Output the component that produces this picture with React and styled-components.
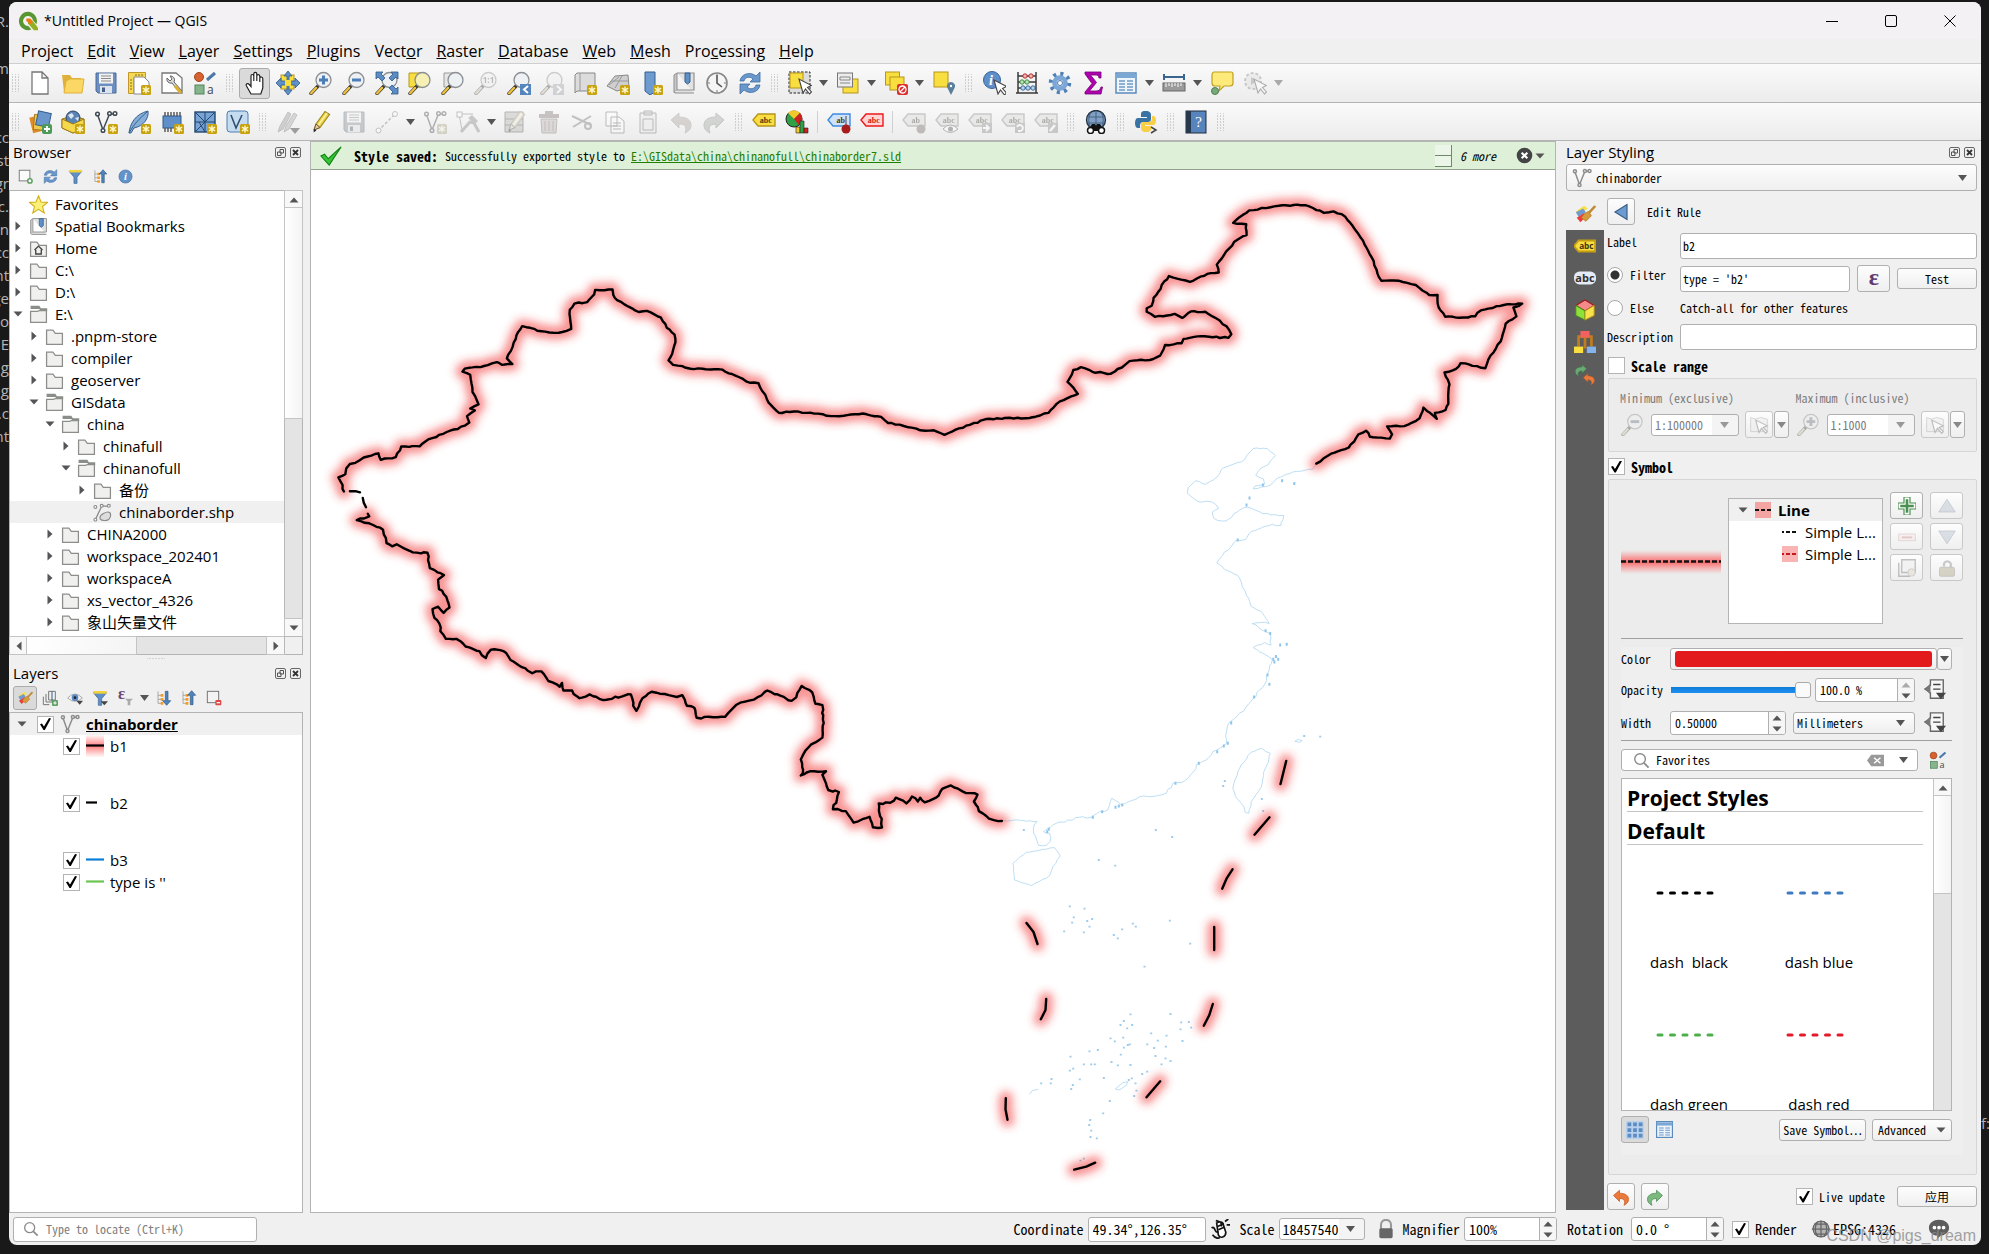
import React from "react";
import styled, { createGlobalStyle, css } from "styled-components";

const arrow = (fill) =>
  `url("data:image/svg+xml,%3Csvg xmlns='http://www.w3.org/2000/svg' width='11' height='6'%3E%3Cpath d='M0 0h11L5.5 6z' fill='%23${fill}'/%3E%3C/svg%3E")`;

const GlobalStyle = createGlobalStyle`
  *, *::before, *::after { box-sizing: border-box; }
  body {
    margin: 0;
    background: #191919;
    color: #000;
    font-family: "Open Sans", "Noto Sans CJK SC", sans-serif;
    font-size: 15px;
    line-height: 22px;
    overflow: hidden;
  }
  button, input, select { font: inherit; color: inherit; margin: 0; }
  button { padding: 0; }
  svg { display: block; flex: none; }
`;

const smallFont = css`
  font-family: "Noto Sans CJK SC", "Liberation Mono", monospace;
  font-feature-settings: "hwid";
  font-size: 12px;
  line-height: 16px;
`;

const raised = css`
  background: linear-gradient(#fdfdfd, #efefef);
  border: 1px solid #b0b0b0;
  border-radius: 3px;
`;

/* ---------- window ---------- */

const Desktop = styled.div`
  display: grid;
  grid-template-columns: 9px minmax(0, 1fr) 8px;
  height: 100vh;
  padding: 2px 0 9px;
`;

const Gutter = styled.div`
  overflow: hidden;
  color: #b4b4b4;
  font-size: 15px;
  line-height: 23px;
  white-space: nowrap;
  display: flex;
  flex-direction: column;
  align-items: ${(p) => (p.$right ? "flex-start" : "flex-end")};
  padding-top: ${(p) => (p.$right ? 1110 : 8)}px;
`;

const GutterGap = styled.span`
  flex: 0 0 ${(p) => p.$size}px;
`;

const Window = styled.div`
  display: flex;
  flex-direction: column;
  min-width: 0;
  min-height: 0;
  background: #f0f0f0;
  border-radius: 8px;
  overflow: hidden;
`;

const TitleBar = styled.header`
  display: flex;
  align-items: center;
  height: 37px;
  flex: none;
  padding: 0 2px 0 9px;
  background: #f3f1f3;
`;

const TitleText = styled.h1`
  flex: 1;
  margin: 0 0 0 6px;
  font-size: 14px;
  font-weight: 400;
`;

const CaptionButton = styled.button`
  display: flex;
  align-items: center;
  justify-content: center;
  width: 59px;
  height: 37px;
  border: 0;
  background: none;
`;

const MenuBar = styled.nav`
  display: flex;
  gap: 14px;
  flex: none;
  height: 25px;
  padding-left: 12px;
  border-bottom: 1px solid #cfcfcf;
  font-size: 16px;
`;

const MenuItem = styled.a`
  color: inherit;
  text-decoration: none;
  line-height: 25px;
`;

const Toolbar = styled.div`
  display: flex;
  align-items: center;
  gap: 2px;
  flex: none;
  height: ${(p) => p.$height}px;
  background: linear-gradient(#fafafa, #ececec);
  border-bottom: 1px solid #b4b4b4;
`;

const Handle = styled.span`
  width: 15px;
  height: 18px;
  flex: none;
  background: radial-gradient(circle, #a8a8a8 1px, transparent 1px) center / 3px 3px content-box;
  padding: 0 4px;
  &:first-child {
    width: 13px;
    padding: 0 3px;
  }
`;

const Divider = styled.span`
  width: 1px;
  height: 22px;
  margin: 0 3px;
  background: #d0d0d0;
`;

const ToolButton = styled.button`
  display: flex;
  align-items: center;
  justify-content: center;
  width: ${(p) => p.$size || 31}px;
  height: ${(p) => p.$size || 31}px;
  flex: none;
  border: 1px solid ${(p) => (p.$on ? "#ababab" : "transparent")};
  border-radius: 3px;
  background: ${(p) => (p.$on ? "#dadada" : "none")};
  opacity: ${(p) => (p.$dim ? 0.4 : 1)};
  filter: ${(p) => (p.$dim ? "grayscale(0.8)" : "none")};
`;

const MenuArrow = styled.button`
  width: 13px;
  height: 20px;
  flex: none;
  border: 0;
  background: ${(p) => arrow(p.$dim ? "aaaaaa" : "555555")} center / 9px 6px no-repeat;
`;

/* ---------- docks ---------- */

const Workspace = styled.div`
  display: flex;
  flex: 1;
  min-height: 0;
  padding-right: 4px;
`;

const LeftDock = styled.aside`
  display: flex;
  flex-direction: column;
  width: 294px;
  flex: none;
`;

const DockHeader = styled.div`
  display: flex;
  align-items: center;
  gap: 4px;
  height: 22px;
  flex: none;
  padding: 0 2px 0 ${(p) => (p.$flush ? 0 : 4)}px;
`;

const DockTitle = styled.h2`
  flex: 1;
  margin: 0;
  font-family: "Open Sans", sans-serif;
  font-feature-settings: normal;
  font-size: 15px;
  font-weight: 400;
`;

const DockButton = styled.button`
  display: flex;
  align-items: center;
  justify-content: center;
  width: 11px;
  height: 11px;
  border: 1px solid #666;
  border-radius: 2px;
  background: none;
`;

const DockTools = styled.div`
  display: flex;
  align-items: center;
  gap: 1px;
  flex: none;
  height: ${(p) => p.$height}px;
  padding-left: 4px;
`;

const TreeFrame = styled.div`
  display: grid;
  grid-template-columns: minmax(0, 1fr) 18px;
  grid-template-rows: minmax(0, 1fr) 18px;
  height: 465px;
  flex: none;
  border: 1px solid #b4b4b4;
  background: #fff;
`;

const TreeList = styled.ul`
  list-style: none;
  margin: 0;
  padding: 2px 0 0;
  overflow: hidden;
`;

const TreeRow = styled.li`
  display: flex;
  align-items: center;
  height: 22px;
  padding-left: ${(p) => 2 + p.$depth * 16}px;
  background: ${(p) => (p.$selected ? "#f0f0f0" : "none")};
  white-space: pre;
`;

const Expander = styled.span`
  display: flex;
  justify-content: center;
  width: 11px;
  margin-right: 6px;
`;

const TreeLabel = styled.span`
  margin-left: 7px;
`;

const ScrollBar = styled.div`
  display: flex;
  flex-direction: ${(p) => (p.$horizontal ? "row" : "column")};
  background: #e4e4e4;
  border: 0 solid #b8b8b8;
  border-width: ${(p) => (p.$horizontal ? "1px 0 0" : "0 0 0 1px")};
`;

const ScrollButton = styled.button`
  display: flex;
  align-items: center;
  justify-content: center;
  flex: 0 0 17px;
  border: 0;
  background: #f8f8f8;
  box-shadow: 0 0 0 1px #c4c4c4;
`;

const ScrollThumb = styled.div`
  flex: ${(p) => p.$grow} 1 0;
  background: linear-gradient(90deg, #fff, #f4f4f4);
  box-shadow: 0 0 0 1px #c4c4c4;
`;

const ScrollSpace = styled.div`
  flex: ${(p) => p.$grow} 1 0;
`;

const Corner = styled.div`
  background: #f0f0f0;
  border: 1px solid #b8b8b8;
  border-width: 1px 0 0 1px;
`;

const Grip = styled.div`
  height: 7px;
  flex: none;
  background: radial-gradient(circle, #b5b5b5 1px, transparent 1px) center / 3px 3px;
  width: 18px;
  align-self: center;
  clip-path: inset(2px 0 3px);
`;

const LayerList = styled.ul`
  flex: 1;
  list-style: none;
  margin: 0;
  padding: 0;
  border: 1px solid #b4b4b4;
  background: #fff;
  min-height: 0;
`;

const LayerRow = styled.li`
  display: flex;
  align-items: flex-start;
  height: ${(p) => (p.$tall ? 57 : 22)}px;
  padding-left: ${(p) => (p.$group ? 7 : 53)}px;
  background: ${(p) => (p.$group ? "#f0f0f0" : "none")};
  label {
    display: flex;
    align-items: center;
    height: 22px;
    gap: 6px;
  }
  input {
    margin-left: ${(p) => (p.$group ? 4 : 0)}px;
  }
  b {
    text-decoration: underline;
  }
`;

const CheckBox = styled.input.attrs({ type: "checkbox" })`
  appearance: none;
  width: 17px;
  height: 17px;
  flex: none;
  border: 1px solid #b4b4b4;
  background: #fff;
  display: grid;
  place-items: center;
  &:checked::after {
    content: "";
    width: 11px;
    height: 12px;
    background: #000;
    clip-path: polygon(0 52%, 18% 45%, 36% 70%, 82% 0, 100% 4%, 44% 100%, 32% 100%);
  }
`;

const Radio = styled.input.attrs({ type: "radio" })`
  appearance: none;
  width: 16px;
  height: 16px;
  flex: none;
  border: 1px solid #a8a8a8;
  border-radius: 50%;
  background: #fff;
  &:checked {
    background: radial-gradient(circle, #333 4px, #fff 5px);
  }
`;

/* ---------- map ---------- */

const Canvas = styled.main`
  display: flex;
  flex-direction: column;
  flex: 1;
  min-width: 0;
  margin: 0 10px 0 7px;
  border: 1px solid #b4b4b4;
  background: #fff;
`;

const Message = styled.div`
  ${smallFont}
  display: flex;
  align-items: center;
  height: 28px;
  flex: none;
  padding: 0 10px 0 9px;
  background: #dff0d8;
  border-bottom: 1px solid #93a08e;
  white-space: pre;
  b {
    font-size: 14px;
    margin: 0 7px 0 12px;
  }
  a {
    color: #1f7f00;
  }
`;

const MessageMore = styled.em`
  margin: 0 20px 0 8px;
`;

const MessageSteps = styled.div`
  display: flex;
  flex-direction: column;
  margin-left: auto;
`;

const StepButton = styled.button`
  width: 17px;
  height: 11px;
  border: 0 solid #6f8a6a;
  border-width: 0 1px 1px 0;
  background: #ecf6e8;
`;

const MapArea = styled.div`
  flex: 1;
  min-height: 0;
  svg {
    width: 100%;
    height: 100%;
  }
`;

/* ---------- layer styling ---------- */

const RightDock = styled.aside`
  ${smallFont}
  display: flex;
  flex-direction: column;
  width: 411px;
  flex: none;
`;

const LayerPicker = styled.div`
  ${raised}
  display: flex;
  align-items: center;
  height: 27px;
  flex: none;
  margin-top: 1px;
  padding-left: 5px;
`;

const PlainSelect = styled.select`
  appearance: none;
  flex: 1;
  height: 100%;
  border: 0;
  padding: 0 4px;
  background: ${arrow("555555")} right 9px center / 9px 6px no-repeat;
`;

const StylingBody = styled.div`
  display: flex;
  flex: 1;
  min-height: 0;
  padding-top: 7px;
`;

const SideTabs = styled.div`
  display: flex;
  flex-direction: column;
  width: 38px;
  flex: none;
  margin-bottom: 3px;
  background: #5c5c5c;
`;

const SideTab = styled.button`
  display: flex;
  align-items: center;
  justify-content: center;
  height: 32px;
  border: 0;
  background: ${(p) => (p.$on ? "#f0f0f0" : "none")};
`;

const StylePage = styled.div`
  display: flex;
  flex-direction: column;
  flex: 1;
  min-width: 0;
  padding: 0 0 3px 3px;
`;

const Row = styled.div`
  display: flex;
  align-items: center;
  flex: none;
  gap: ${(p) => p.$gap || 0}px;
  height: ${(p) => p.$height || 27}px;
  margin-top: ${(p) => p.$top || 0}px;
`;

const FieldLabel = styled.label`
  display: flex;
  align-items: center;
  gap: 7px;
  width: ${(p) => p.$width || 73}px;
  height: ${(p) => (p.$raised ? 20 : 24)}px;
  flex: none;
  align-self: ${(p) => (p.$raised ? "flex-start" : "center")};
  white-space: nowrap;
`;

const CheckLabel = styled.label`
  display: flex;
  align-items: center;
  gap: 6px;
  margin-left: 1px;
  ${(p) => p.$bold && "font-weight: 700; font-size: 14px;"}
`;

const TextInput = styled.input`
  flex: 1;
  min-width: 0;
  height: 26px;
  border: 1px solid #b0b0b0;
  border-radius: 3px;
  background: #fff;
  padding: 0 2px;
`;

const Button = styled.button`
  ${raised}
  display: flex;
  align-items: center;
  justify-content: center;
  gap: 10px;
  width: ${(p) => p.$width || 28}px;
  height: ${(p) => p.$height || 27}px;
  flex: none;
  white-space: nowrap;
  background: ${(p) => (p.$on ? "#dadada" : "linear-gradient(#fdfdfd, #efefef)")};
  border-color: ${(p) => (p.$dim ? "#c8c8c8" : "#b0b0b0")};
  svg {
    opacity: ${(p) => (p.$dim ? 0.5 : 1)};
  }
`;

const GroupBox = styled.fieldset`
  flex: ${(p) => (p.$fill ? "1" : "none")};
  min-width: 0;
  min-height: 0;
  margin: 4px 0 0 1px;
  border: 1px solid #d6d6d6;
  border-radius: 2px;
  background: #ececec;
  padding: ${(p) => p.$pad};
`;

const ScaleGrid = styled.div`
  display: grid;
  grid-template-columns: 1fr 1fr;
  column-gap: 6px;
  color: #7c7c7c;
`;

const ScaleCell = styled.div`
  display: flex;
  align-items: center;
  gap: 6px;
  margin-top: 5px;
`;

const Combo = styled.select`
  ${raised}
  appearance: none;
  width: ${(p) => p.$width}px;
  height: 22px;
  padding: 0 3px;
  flex: none;
  background: ${(p) => arrow(p.disabled ? "999999" : "555555")} right 9px center / 9px 6px no-repeat,
    ${(p) => (p.$light ? "linear-gradient(90deg, #fff 70%, #f4f4f4 70%)" : "linear-gradient(#fdfdfd, #efefef)")};
  opacity: 1;
`;

const SplitPair = styled.div`
  display: flex;
  gap: 1px;
`;

const DropButton = styled.button`
  ${raised}
  width: 15px;
  height: ${(p) => p.$height}px;
  background: ${(p) => arrow(p.$dim ? "888888" : "555555")} center / 9px 6px no-repeat, linear-gradient(#fdfdfd, #efefef);
`;

const SymbolTop = styled.div`
  display: grid;
  grid-template-columns: 100px 155px 1fr;
  column-gap: 7px;
  height: 147px;
  border-bottom: 1px solid #a0a0a0;
`;

const SymbolTree = styled.ul`
  list-style: none;
  margin: 6px 0 0;
  padding: 0;
  height: 126px;
  background: #fff;
  border: 1px solid #b4b4b4;
  font-family: "Open Sans", sans-serif;
  font-feature-settings: normal;
  font-size: 15px;
`;

const SymbolRow = styled.li`
  display: flex;
  align-items: center;
  gap: 7px;
  height: 22px;
  padding-left: ${(p) => (p.$root ? 9 : 53)}px;
  background: ${(p) => (p.$root ? "#f0f0f0" : "none")};
  font-weight: ${(p) => (p.$root ? 700 : 400)};
  white-space: nowrap;
`;

const SymbolButtons = styled.div`
  display: grid;
  grid-template-columns: 33px 33px;
  grid-auto-rows: 27px;
  gap: 4px 7px;
`;

const SymbolForm = styled.div`
  background: #efefef;
  margin-top: 8px;
  padding: 1px 11px 0 0;
  height: 508px;
`;

const ColorButton = styled.button`
  ${raised}
  flex: 1;
  height: 22px;
  padding: 2px 4px;
  &::before {
    content: "";
    display: block;
    height: 16px;
    border-radius: 3px;
    background: #e31a1c;
  }
`;

const Slider = styled.input.attrs({ type: "range" })`
  appearance: none;
  width: 140px;
  height: 17px;
  margin-right: 4px;
  background: linear-gradient(#0e7ad8, #1e90f0) center / 100% 6px no-repeat;
  &::-webkit-slider-thumb {
    appearance: none;
    width: 16px;
    height: 16px;
    border: 1px solid #aaa;
    border-radius: 3px;
    background: #fafafa;
  }
`;

const SpinBox = styled.div`
  display: flex;
  width: ${(p) => p.$width}px;
  height: 24px;
  flex: none;
  border: 1px solid #b0b0b0;
  border-radius: 3px;
  background: #fff;
  overflow: hidden;
  input {
    flex: 1;
    min-width: 0;
    border: 0;
    padding: 0 4px;
    background: none;
  }
`;

const SpinButtons = styled.div`
  display: flex;
  flex-direction: column;
  width: 17px;
  border-left: 1px solid #b0b0b0;
  button {
    display: flex;
    align-items: center;
    justify-content: center;
    flex: 1;
    border: 0;
    background: #f6f6f6;
  }
`;

const UnitCombo = styled(Combo)`
  margin-left: 7px;
`;

const OverrideButton = styled.button`
  display: flex;
  border: 0;
  background: none;
  margin-left: 9px;
`;

const SearchBox = styled.div`
  display: flex;
  align-items: center;
  gap: 6px;
  flex: 1;
  height: 22px;
  padding: 0 7px 0 11px;
  margin-right: 11px;
  border: 1px solid #b0b0b0;
  border-radius: 3px;
  background: #fff;
  input {
    flex: 1;
    min-width: 0;
    border: 0;
    padding: 0;
    background: none;
  }
  button {
    margin-left: 7px;
  }
`;

const StylesButton = styled.button`
  display: flex;
  border: 0;
  background: none;
  margin-right: 5px;
`;

const FormRule = styled.hr`
  margin: 5px 0 0;
  border: 0;
  border-top: 1px solid #a0a0a0;
`;

const StyleFrame = styled.div`
  display: grid;
  grid-template-columns: minmax(0, 1fr) 18px;
  height: 333px;
  margin-top: 7px;
  border: 1px solid #b4b4b4;
  background: #fff;
  overflow: hidden;
  font-family: "Open Sans", sans-serif;
  font-feature-settings: normal;
`;

const StyleHeading = styled.h3`
  margin: 0 10px 0 5px;
  padding-top: 5px;
  height: 33px;
  border-bottom: 1px solid #c4c4c4;
  font-size: 21px;
  line-height: 28px;
  font-weight: 700;
`;

const StyleGrid = styled.div`
  display: grid;
  grid-template-columns: 130px 130px;
  grid-auto-rows: 142px;
  padding-left: 2px;
`;

const StyleItem = styled.figure`
  margin: 0;
  display: flex;
  flex-direction: column;
  align-items: center;
  padding-top: 46px;
  font-size: 15px;
  line-height: 22px;
  white-space: pre;
  figcaption {
    margin-top: 56px;
  }
`;

const ListFooter = styled.div`
  display: flex;
  align-items: center;
  gap: 6px;
  margin-top: 5px;
`;

const Spacer = styled.span`
  flex: 1;
`;

/* ---------- status bar ---------- */

const StatusBar = styled.footer`
  ${smallFont}
  font-size: 14px;
  position: relative;
  display: flex;
  align-items: center;
  height: 32px;
  flex: none;
  padding: 0 31px 0 4px;
`;

const Locator = styled.label`
  display: flex;
  align-items: center;
  gap: 7px;
  width: 244px;
  height: 25px;
  margin-right: auto;
  padding-left: 9px;
  border: 1px solid #b0b0b0;
  border-radius: 3px;
  background: #fff;
  font-size: 12px;
  input {
    border: 0;
    padding: 0;
    width: 190px;
  }
  input::placeholder {
    color: #808080;
  }
`;

const StatusField = styled.label`
  display: flex;
  align-items: center;
  gap: 4px;
  margin: 0 ${(p) => p.$after || 0}px 0 ${(p) => p.$before || 0}px;
  white-space: nowrap;
`;

const CoordInput = styled(TextInput)`
  flex: none;
  width: 118px;
  height: 25px;
  padding: 0 4px;
`;

const RotationSpin = styled.span`
  margin-left: 4px;
`;

const CrsButton = styled.button`
  display: flex;
  align-items: center;
  gap: 2px;
  border: 0;
  background: none;
  margin: 0 ${(p) => p.$after || 0}px 0 ${(p) => p.$before || 0}px;
`;

const Watermark = styled.span`
  position: absolute;
  right: 5px;
  bottom: 0;
  color: #8a8a8acc;
  font-family: "Liberation Sans", sans-serif;
  font-feature-settings: normal;
  font-size: 16px;
  line-height: 18px;
`;

/* ---------- icons ---------- */

const Badge = () => (
  <g>
    <rect x="14" y="14" width="10" height="10" rx="1.5" fill="#c8a30f" />
    <path d="M19 15.5v7M15.9 17.2l6.2 3.6M22.1 17.2l-6.2 3.6" stroke="#fff8c8" strokeWidth="1.4" />
  </g>
);

const Lens = ({ fill = "#edf1f4", children }) => (
  <g>
    <path d="M10 14L2 22.5" stroke="#3a3a3a" strokeWidth="3.4" strokeLinecap="round" />
    <path d="M7 17L2.2 22.3" stroke="#f0c23a" strokeWidth="2.4" strokeLinecap="round" />
    <circle cx="14.5" cy="9" r="7.5" fill={fill} stroke="#8b8f92" strokeWidth="1.3" />
    {children}
  </g>
);

const TagShape = ({ fill, stroke, color = "#4b3b10", text = "abc" }) => (
  <g>
    <path d="M1 10l5-6h17v12H6z" fill={fill} stroke={stroke} strokeWidth="1.4" />
    <text x="13.8" y="13" fontSize="8" fontWeight="700" fill={color} textAnchor="middle" fontFamily="Liberation Serif, serif">{text}</text>
  </g>
);

const VLine = ({ color = "#3f4b52", width = 1.5 }) => (
  <g fill="#fff" stroke={color} strokeWidth={width}>
    <path d="M3.5 4.5L9 20 15.5 4h5" fill="none" />
    <circle cx="3.5" cy="4" r="1.8" />
    <circle cx="9" cy="20.5" r="1.8" />
    <circle cx="15.5" cy="3.5" r="1.8" />
    <circle cx="21" cy="3.5" r="1.8" />
  </g>
);

const Pencil = () => (
  <g>
    <path d="M5 20l2-6L16 1.5l4.500 3L11 17.500z" fill="#ecd04a" stroke="#a08a1c" strokeWidth="1.2" />
    <path d="M9.500 15L18 3" stroke="#fff3a0" strokeWidth="1.4" />
    <path d="M5 20l2-6 4 3.500z" fill="#e9c9a0" stroke="#6b5a3a" />
    <path d="M4.500 22.500l.8-3.500 2 1.400z" fill="#222" />
  </g>
);

const Brush = () => (
  <g>
    <path d="M2 9l9-6 4 3-8 6z" fill="#f7e04b" />
    <path d="M2 10l3 5 8-5-3-4z" fill="#6f9bd0" />
    <path d="M3 16l4 5 7-7-3-3z" fill="#ee3b3b" />
    <path d="M11 12l5-3 3 5-6 6-5-4z" fill="#d49a3c" stroke="#b07a28" strokeWidth=".8" />
    <path d="M17 10l5.500-6" stroke="#c08a34" strokeWidth="2.6" strokeLinecap="round" />
  </g>
);

const Funnel = () => (
  <g>
    <path d="M2 4h20l-7.500 9v10h-5V13z" fill="#5f8fc4" stroke="#3d6796" />
    <rect x="2" y="1.500" width="20" height="4" fill="#f3d33c" />
  </g>
);

const Refresh = () => (
  <g fill="#6a98cc" stroke="#3f6da3" strokeWidth=".8">
    <path d="M2 10C3 3 12 0 18 5l4-4v10H12l3-3C12 5 7 6 6 10z" />
    <path d="M22 14c-1 7-10 10-16 5l-4 4V13h10l-3 3c3 3 8 2 9-2z" />
  </g>
);

const Rows = ({ up }) => (
  <g>
    <path d="M3 2v18h6M3 8h6M3 14h6" stroke="#8a8a8a" fill="none" />
    <path d="M7 6h4v4H7zM7 12h4v4H7zM7 18h4v4H7z" fill="#f59a22" />
    <path d={up ? "M16 1l6 7h-4v14h-4V8h-4z" : "M16 23l6-7h-4V2h-4v14h-4z"} fill="#4f83bd" stroke="#2d567f" />
  </g>
);

const FolderShape = () => (
  <path d="M2 5V4h8l3 4h9v14H2z" fill="#f0f0ef" stroke="#8d8d89" strokeWidth="1.6" />
);

const UndoShape = ({ fill, stroke }) => (
  <path d="M2 10l8-7v4c9 0 12 4 12 8s-2 6-6 8c2-5 1-9-6-9v4z" fill={fill} stroke={stroke} />
);

const PointerShape = () => (
  <path d="M11 8l4 14 2.500-4 4 5 2-2-4-4.500 4-2z" fill="#fff" stroke="#444" strokeWidth="1.1" />
);

const Mini = ({ kind }) => (
  <g>
    <rect x="14" y="13" width="10" height="10" fill="#8c8c8c" />
    {kind === "right" && <path d="M15 18h6m-3-3l3 3-3 3" stroke="#fff" strokeWidth="1.8" fill="none" />}
    {kind === "turn" && <path d="M17 21h2a3 3 0 1 0-3-4" stroke="#fff" strokeWidth="1.8" fill="none" />}
    {kind === "edit" && <path d="M16 21l5-6" stroke="#fff" strokeWidth="2.4" />}
  </g>
);

const icons = {
  qgis: (
    <>
      <path d="M12 1a11 11 0 1 0 4 21.300l-3.600-4.300A6 6 0 1 1 18 11l4 5A11 11 0 0 0 12 1z" fill="#589632" />
      <path d="M12 11h5l7 9v3h-5l-7-8z" fill="#93b023" />
      <path d="M10 9h5l3 4-3 3-5-4z" fill="#ee7913" />
    </>
  ),
  page: <path d="M4 1h10l6 6v16H4zM14 1v6h6" fill="#fff" stroke="#777" strokeWidth="1.3" />,
  open: (
    <>
      <path d="M1 4h8l2 3h9v14H3z" fill="#e0b13a" />
      <path d="M3 22L5 10l4-2h14l-2 14z" fill="#fbd865" stroke="#e0b13a" />
    </>
  ),
  save: (
    <>
      <path d="M2 2h20v20H4l-2-2z" fill="#6b8fc0" stroke="#4a6a97" />
      <rect x="5" y="2.500" width="14" height="10" fill="#f2f2f2" />
      <path d="M7 5h10M7 7.500h10M7 10h10" stroke="#888" />
      <rect x="6" y="15" width="12" height="7" fill="#dde3ec" />
      <rect x="8" y="16.500" width="3" height="4.500" fill="#44608a" />
    </>
  ),
  layout: (
    <>
      <path d="M1.500 1.500h17v5H7v16H1.500z" fill="#f4d955" stroke="#c0982a" />
      <path d="M3 9h2M3 12h2M3 15h2M3 18h2M9 3v2M12 3v2M15 3v2" stroke="#8a6a18" />
      <path d="M7 6h10l5 5v12H7z" fill="#fff" stroke="#888" />
      <Badge />
    </>
  ),
  layouts: (
    <>
      <path d="M2 2h14l6 5v15H2z" fill="#fff" stroke="#777" strokeWidth="1.3" />
      <path d="M7 7a4 4 0 0 0 5 5l8 10 2-2-8-9a4 4 0 0 0-4-6l2 3-2 2z" fill="#d9d9d9" stroke="#666" />
      <path d="M15 15l6 7" stroke="#dcae2c" strokeWidth="3" />
    </>
  ),
  styles: (
    <>
      <circle cx="6" cy="6" r="4.500" fill="#d5622f" stroke="#a34720" />
      <path d="M14 9l8-7" stroke="#4d78aa" strokeWidth="3" />
      <rect x="2" y="14" width="9" height="9" fill="#87b58b" stroke="#52835a" />
      <text x="14" y="23" fontSize="12" fill="#444" fontFamily="Open Sans, sans-serif">a</text>
    </>
  ),
  hand: (
    <path d="M8 23L3.500 15c-1-2 1-3.500 2.800-1.500L8 15.500V5c0-2 2.500-2 2.800 0V3c0-2.200 3-2.200 3 0v2c0-2 3-1.800 3 .5V7c.4-1.600 3-1.400 3 .8V17l-2 6zM10.800 5v5M13.800 5v5M16.800 6v5" fill="#fff" stroke="#222" strokeWidth="1.2" />
  ),
  panTo: (
    <>
      <rect x="5" y="4" width="13" height="14" fill="#f8de3e" stroke="#b8951c" />
      <path d="M12 0l4 5h-3v5h6V7l5 5-5 5v-3h-6v5h3l-4 5-4-5h3v-5H5v3l-5-5 5-5v3h6V5H8z" fill="#5f90c8" stroke="#2f5a8c" strokeWidth=".8" />
      <rect x="9" y="9" width="6" height="6" fill="#f8de3e" />
    </>
  ),
  zoomIn: <Lens><path d="M14.500 4.500v9M10 9h9" stroke="#4c7db5" strokeWidth="3" /></Lens>,
  zoomOut: <Lens><path d="M10 9h9" stroke="#4c7db5" strokeWidth="3" /></Lens>,
  zoomFull: (
    <>
      <Lens />
      <path d="M1 1h7L6 3l4 4-3 3-4-4-2 2zM23 1h-7l2 2-4 4 3 3 4-4 2 2zM23 23h-7l2-2-4-4 3-3 4 4 2-2z" fill="#5b8cc3" stroke="#2f5a8c" strokeWidth=".8" />
    </>
  ),
  zoomSel: <><path d="M1 2h12v14H1z" fill="#f8de3e" stroke="#b8951c" /><Lens fill="#f6f0b4" /></>,
  zoomLayer: <><path d="M3 2h12v14H3z" fill="#e6e6e6" stroke="#999" /><Lens /></>,
  zoomNative: <Lens><text x="14.500" y="12" fontSize="8" fontWeight="700" textAnchor="middle" fill="#666">1:1</text></Lens>,
  zoomLast: <><Lens /><rect x="13" y="13" width="11" height="11" fill="#5585bd" /><path d="M21 15l-4 3.500 4 3.500" stroke="#fff" strokeWidth="2" fill="none" /></>,
  zoomNext: <><Lens /><rect x="13" y="13" width="11" height="11" fill="#8ba7c8" /><path d="M17 15l4 3.500-4 3.500" stroke="#fff" strokeWidth="2" fill="none" /></>,
  newMap: <><path d="M4 2h18v18H4l-2 2V4z" fill="#dcdcdc" stroke="#888" /><path d="M7 2v18" stroke="#999" /><Badge /></>,
  new3d: <><path d="M1 15l8-10 13-1 1 12-12 4z" fill="#cfcfcf" stroke="#888" /><path d="M5 10l17 0M3 14l10-8M9 17l7-12" stroke="#999" /><Badge /></>,
  newBookmark: <><path d="M6 1h10v20l-5 3-5-4z" fill="#6d9bd0" stroke="#365f8e" /><Badge /></>,
  bookmarks: <><path d="M5 2h17v17H5c-4 0-4 3 0 3h17" fill="#e2e2e2" stroke="#909090" strokeWidth="1.2" /><path d="M2 20V4l3-2v17" fill="#c8c8c8" stroke="#909090" /><path d="M13 2h5v9l-2.500 2-2.500-2z" fill="#5f90c8" stroke="#365f8e" /></>,
  clock: <><circle cx="12" cy="12" r="10" fill="#f5f5f5" stroke="#888" strokeWidth="1.6" /><path d="M12 4v8l5 4" stroke="#555" strokeWidth="1.6" fill="none" /><path d="M12 3v2M12 19v2M3 12h2M19 12h2" stroke="#777" /></>,
  refresh: <Refresh />,
  select: <><rect x="1" y="1" width="21" height="21" fill="#ddd" stroke="#222" strokeDasharray="2.500 1.500" /><rect x="2" y="2" width="13" height="15" fill="#f8de3e" stroke="#b8951c" /><PointerShape /></>,
  selectForm: <><rect x="7" y="8" width="15" height="14" fill="#f8de3e" stroke="#b8951c" /><rect x="1.500" y="2" width="15" height="14" fill="#ececec" stroke="#777" /><path d="M4 6h10v3H4zM4 12h10" stroke="#888" /></>,
  deselect: <><rect x="1.500" y="1" width="14" height="13" fill="#f8de3e" stroke="#b8951c" /><rect x="6" y="6" width="14" height="13" fill="#f8de3e" stroke="#b8951c" /><rect x="13" y="13" width="11" height="11" rx="2" fill="#dd2f2f" /><circle cx="18.500" cy="18.500" r="3.500" stroke="#fff" fill="none" strokeWidth="1.3" /><path d="M16 21l5-5" stroke="#fff" strokeWidth="1.3" /></>,
  selectLoc: <><rect x="2" y="1" width="14" height="15" fill="#f8de3e" stroke="#b8951c" /><path d="M19 24l-3.500-7a4 4 0 1 1 7 0z" fill="#5a7f9b" /><circle cx="19" cy="15" r="1.200" fill="#fff" /></>,
  identify: <><circle cx="10" cy="9" r="8.500" fill="#5f8fc8" stroke="#38659b" /><text x="9" y="14" fontSize="14" fontStyle="italic" fontWeight="700" textAnchor="middle" fill="#fff" fontFamily="Liberation Serif, serif">i</text><g transform="translate(1 1)"><PointerShape /></g></>,
  abacus: (
    <>
      <path d="M3 1v21M21 1v21M3 5h18M3 11h18M3 17h18M1 22h22" stroke="#3b3b3b" strokeWidth="1.5" fill="none" />
      <g strokeWidth="1"><g fill="#f5b0b0" stroke="#b72f2f"><circle cx="10" cy="5" r="2.200" /><circle cx="16" cy="5" r="2.200" /></g><g fill="#b8e2b2" stroke="#3f8c43"><circle cx="7" cy="11" r="2.200" /><circle cx="12" cy="11" r="2.200" /></g><g fill="#b6d4ee" stroke="#376a99"><circle cx="8" cy="17" r="2.200" /><circle cx="13" cy="17" r="2.200" /><circle cx="18" cy="17" r="2.200" /></g></g>
    </>
  ),
  gear: <><circle cx="12" cy="12" r="9" stroke="#4f80b8" strokeWidth="4.500" strokeDasharray="3 4.070" fill="none" /><circle cx="12" cy="12" r="5.500" fill="#dce9f6" stroke="#7ba6d6" strokeWidth="4.500" /><circle cx="12" cy="12" r="2.500" fill="#fff" stroke="#4c78ad" /></>,
  sigma: <path d="M4 1h16v6h-2c-.5-2.500-1.500-3-4-3H9.500l6 7.500L8.500 20H15c3 0 4-1 5-4h1.500L20 23H4v-2l7-8.500L4 3z" fill="#b000b0" stroke="#760076" strokeWidth=".8" />,
  table: <><rect x="2" y="2" width="20" height="20" fill="#eef4fa" stroke="#5b8abd" strokeWidth="1.5" /><path d="M2 3h20v4H2z" fill="#7ba7d5" /><path d="M5 10h6M5 13h6M5 16h6M5 19h6M13 10h6M13 13h6M13 16h6M13 19h6" stroke="#6d9ac9" strokeWidth="1.3" /></>,
  ruler: <><path d="M2 6h20M2 3v6M22 3v6" stroke="#3a658f" strokeWidth="2" /><rect x="1" y="12" width="22" height="8" fill="#9a9a9a" stroke="#666" /><path d="M4 12v4M7 12v3M10 12v4M13 12v3M16 12v4M19 12v3" stroke="#fff" /></>,
  tip: <><path d="M4 1h17c2 0 2 1 2 2v9c0 2-1 3-3 3h-6l-5 5 1-5H5c-2 0-3-1-3-3V4c0-2 1-3 2-3z" fill="#fdea7a" stroke="#bfa01e" strokeWidth="1.2" /><circle cx="5" cy="20" r="3.500" fill="#77a97b" stroke="#4d7f52" /></>,
  actions: <><circle cx="10" cy="10" r="8" fill="#ddd" stroke="#888" strokeWidth="2" strokeDasharray="3 2" /><path d="M8 6l6 4-6 4z" fill="#888" /><PointerShape /></>,
  dataSource: <><rect x="3" y="6" width="13" height="16" transform="rotate(-14 9 14)" fill="#e08a2a" /><rect x="6" y="5" width="13" height="15" fill="#ecc94a" stroke="#a67a1b" transform="rotate(5 12 12)" /><rect x="9" y="2" width="13" height="14" transform="rotate(12 15 9)" fill="#6a96cb" stroke="#335d8f" /><rect x="14" y="14" width="10" height="10" rx="2" fill="#4e9a59" /><path d="M19 16v6M16 19h6" stroke="#fff" strokeWidth="1.8" /></>,
  geopackage: <><path d="M1 9l11-3 11 3v9l-11 5-11-5z" fill="#e4b92c" stroke="#9c7a17" /><circle cx="12" cy="8" r="7" fill="#5b83b5" stroke="#2c4668" /><path d="M7 5l4-2 2 3-3 3zM14 8l4-1-1 4z" fill="#dfe7ef" /><path d="M1 9l11 5 11-5v9l-11 5-11-5z" fill="#f6d84c" stroke="#9c7a17" /><Badge /></>,
  newShape: <><VLine /><Badge /></>,
  spatialite: <><path d="M2 23C3 14 8 4 21 1c1 7-4 15-14 17l-3 5z" fill="#87aed8" stroke="#36608e" /><path d="M2 23C7 14 12 9 20 2" stroke="#36608e" fill="none" /><Badge /></>,
  memory: <><rect x="3" y="6" width="18" height="12" fill="#5f8fc8" stroke="#2f5a8c" /><path d="M5 2v4M8 2v4M11 2v4M14 2v4M17 2v4M20 2v4M5 18v4M8 18v4M11 18v4" stroke="#444" strokeWidth="1.3" /><Badge /></>,
  meshNew: <><rect x="2" y="2" width="20" height="20" fill="#77a3d6" stroke="#23466d" strokeWidth="1.4" /><path d="M2 12h20M12 2v20M2 2l10 10M22 2L12 12 2 22M6 12l6 10" stroke="#23466d" fill="none" /><Badge /></>,
  virtual: <><rect x="1" y="1" width="21" height="21" rx="3" fill="#c5dcf0" stroke="#4f7fae" /><path d="M5 5l5 13 6-13" stroke="#2f5070" strokeWidth="1.6" fill="none" /><Badge /></>,
  pencils: <><path d="M2 22l2-6L12 2l3 2L7 19z" fill="#999" stroke="#777" /><path d="M8 22l2-6 8-13 3 2-8 14z" fill="#aaa" stroke="#777" /><path d="M14 18h10l-5 6z" fill="#222" /></>,
  pencil: <Pencil />,
  digitize: <><path d="M3 21L20 4" stroke="#777" strokeWidth="1.5" strokeDasharray="3 2" /><circle cx="3.500" cy="20.500" r="2.500" fill="#fff" stroke="#777" /><circle cx="20" cy="4" r="2.500" fill="#fff" stroke="#777" /></>,
  vertex: <><path d="M3 4l3 16M3 4h14" stroke="#777" fill="none" /><rect x="1" y="2" width="5" height="5" fill="#fff" stroke="#777" /><path d="M5 22l9-10 4 1 5 9" stroke="#888" strokeWidth="3" fill="none" /><path d="M12 8l4-3 6 6-3 3z" fill="#888" /></>,
  editTable: <><path d="M1 2h18v20H1zM1 9h18M1 15h18" fill="#bbb59a" stroke="#555" /><Pencil /></>,
  trash: <><path d="M8 1h8v3H8zM2 4h20v4H2z" fill="#b06a6a" /><path d="M4 9h16l-1 14H5zM8 11v10M12 11v10M16 11v10" fill="#daa" stroke="#a66" /></>,
  cut: <><path d="M2 6l19 9M3 17L21 6" stroke="#777" strokeWidth="2" /><circle cx="18" cy="16" r="3" fill="none" stroke="#777" strokeWidth="2" /></>,
  copy: <path d="M3 2h11v14H3zM8 7h8l5 4v12H8zM10 13h8M10 16h8M10 19h8" fill="#fff" stroke="#666" />,
  paste: <path d="M4 3h16v20H4zM8 1h8v4H8zM7 9h10v11H7z" fill="#e8e8e8" stroke="#666" />,
  undoGray: <UndoShape fill="#c69c80" stroke="#997" />,
  redoGray: <g transform="translate(24 0) scale(-1 1)"><UndoShape fill="#9aa89a" stroke="#787" /></g>,
  undo: <UndoShape fill="#ea7a3c" stroke="#c65a20" />,
  redo: <g transform="translate(24 0) scale(-1 1)"><UndoShape fill="#7db87f" stroke="#4c8c52" /></g>,
  tag: <TagShape fill="#f8de3e" stroke="#b8951c" />,
  diagram: <><circle cx="9" cy="9" r="8" fill="#2fa043" stroke="#222" /><path d="M9 9L3 3a8 8 0 0 1 12 0z" fill="#f2c82e" /><path d="M9 9l6-6a8 8 0 0 1-1 12z" fill="#cf2020" /><path d="M11 17h4v6h-4z" fill="#f2c82e" stroke="#222" strokeWidth=".6" /><path d="M15 11h4v12h-4z" fill="#2fa043" stroke="#222" strokeWidth=".6" /><path d="M19 18h4v5h-4z" fill="#cf2020" stroke="#222" strokeWidth=".6" /></>,
  tagPin: <><TagShape fill="#cfe2fa" stroke="#3f8ae0" text="ab" /><path d="M19 6v10" stroke="#777" strokeWidth="1.5" /><circle cx="19" cy="19" r="4.500" fill="#a81c1c" /></>,
  tagRed: <TagShape fill="#ffd5d5" stroke="#f01818" color="#d01818" />,
  tagPin2: <><TagShape fill="#ddd9c8" stroke="#888" text="ab" /><circle cx="19" cy="19" r="4.500" fill="#a06060" /></>,
  tagEye: <><TagShape fill="#ddd9c8" stroke="#888" /><path d="M8 19q7-8 15 0-8 7-15 0z" fill="#fff" stroke="#555" /><circle cx="15.500" cy="19" r="2.500" fill="#555" /></>,
  tagMove: <><TagShape fill="#ddd9c8" stroke="#888" /><Mini kind="right" /></>,
  tagTurn: <><TagShape fill="#ddd9c8" stroke="#888" /><Mini kind="turn" /></>,
  tagEdit: <><TagShape fill="#ddd9c8" stroke="#888" /><Mini kind="edit" /></>,
  metasearch: <><circle cx="12" cy="10" r="9.500" fill="#7f9fc4" stroke="#1f2d3d" strokeWidth="1.3" /><path d="M12 1v18M3 7h18M3 13h18M7 2c-3 5-3 11 0 16M17 2c3 5 3 11 0 16" stroke="#3d5675" strokeWidth=".8" fill="none" /><path d="M8 14h3l1 2 1-2h3l4 7H4z" fill="#111" /><circle cx="6.500" cy="20.500" r="3" fill="#fff" stroke="#111" strokeWidth="1.5" /><circle cx="17.500" cy="20.500" r="3" fill="#fff" stroke="#111" strokeWidth="1.5" /></>,
  python: <><path d="M11.500 1C7 1 7 3 7 5v2h6v1H4c-2 0-3 2-3 5s1 5 3 5h2v-3c0-2 2-3 3-3h5c2 0 3-1 3-3V5c0-2-1-4-5.500-4z" fill="#3873a3" /><path d="M12 22c5 0 5-2 5-4v-2h-6v-1h8c2 0 3-2 3-4.500S21 6 19 6h-1v3c0 2-2 3-3 3h-5c-2 0-3 1-3 3v3c0 2 1 4 5 4z" fill="#f8cf44" /><path d="M17 17l5 3-5 3" stroke="#444" strokeWidth="1.5" fill="none" /></>,
  help: <><rect x="2" y="1" width="20" height="22" fill="#5784bc" stroke="#1e2c3c" /><rect x="2" y="1" width="5" height="22" fill="#26384e" /><text x="14.500" y="17" fontSize="15" textAnchor="middle" fill="#fff" fontFamily="Liberation Serif, serif">?</text></>,
  addLayer: <><rect x="2" y="2" width="17" height="17" fill="#fbfbfb" stroke="#777" strokeWidth="1.5" /><circle cx="19" cy="19" r="3.500" fill="#fff" stroke="#5fa064" strokeWidth="2.500" /></>,
  removeLayer: <><rect x="2" y="2" width="17" height="17" fill="#f3f3f3" stroke="#777" strokeWidth="1.5" /><rect x="14" y="15" width="9" height="8" rx="1.500" fill="#e04848" /><path d="M16 19h5" stroke="#fff" strokeWidth="2" /></>,
  funnel: <Funnel />,
  funnelMenu: <><Funnel /><path d="M13 17h11l-5.500 6z" fill="#444" /></>,
  collapse: <Rows up />,
  expand: <Rows />,
  info: <><circle cx="12" cy="12" r="10.500" fill="#6393cb" stroke="#456fa0" /><text x="12" y="18" fontSize="17" fontStyle="italic" fontWeight="700" textAnchor="middle" fill="#fff" fontFamily="Liberation Serif, serif">i</text></>,
  brush: <Brush />,
  addGroup: <><path d="M2 10v12h9M6 6v12h9M10 2h10v13H10z" fill="none" stroke="#777" strokeWidth="1.5" /><path d="M15 2v15" stroke="#335d8f" strokeWidth="1.5" /><rect x="15" y="15" width="9" height="9" rx="2" fill="#5fa064" /><path d="M19.500 17v5M17 19.500h5" stroke="#fff" strokeWidth="1.5" /></>,
  eye: <><path d="M1 12q11-12 22 0-11 10-22 0z" fill="#f4f4f4" stroke="#888" /><circle cx="12" cy="11.500" r="5" fill="#5d8bc2" /><circle cx="12" cy="11.500" r="2" fill="#223" /><path d="M14 16h10l-5 6z" fill="#444" /></>,
  epsilonFilter: <><text x="7" y="14" fontSize="25" fontWeight="700" textAnchor="middle" fill="#6a4a78" fontFamily="Liberation Serif, serif">ε</text><path d="M12 13h12l-4 4v6h-4v-6z" fill="#aaa" /></>,
  star: <path d="M12 1l3.200 7.800 8.300.5-6.400 5.300 2.200 8.200L12 18.200l-7.300 4.600 2.200-8.200L.5 9.300l8.300-.5z" fill="#fbf07a" stroke="#d3ac1b" strokeWidth="1.3" />,
  folder: <FolderShape />,
  folderOpen: <><path d="M2 1h11l2 3h8v4h-8l-2-3H2z" fill="#8b8d88" /><path d="M2 8h9l2-1h9v15H2z" fill="#f0f0ef" stroke="#8d8d89" strokeWidth="1.6" /></>,
  home: <><FolderShape /><path d="M7 14l5-5 5 5M8.500 13.500V19h7v-5.500" fill="none" stroke="#444" strokeWidth="1.7" /></>,
  shp: <><path d="M3 21L11 4h9" stroke="#8a8a8a" strokeWidth="1.6" fill="none" /><g fill="#fff" stroke="#8a8a8a" strokeWidth="1.4"><circle cx="3" cy="5" r="1.800" /><circle cx="11" cy="3.500" r="1.800" /><circle cx="20" cy="3.500" r="1.800" /><circle cx="3" cy="21" r="1.800" /><path d="M9 20c-2-5 9-10 12-8 3 3 0 10-4 10-3 0-6 1-8-2z" fill="#ddd" /></g></>,
  vline: <VLine color="#8d8d8d" width={1.8} />,
  back: <path d="M20 2v20L4 12z" fill="#6b9bd1" stroke="#3a5f88" strokeWidth="1.6" />,
  epsilon: <text x="12" y="20" fontSize="32" fontWeight="700" textAnchor="middle" fill="#5f3b70" fontFamily="Liberation Serif, serif">ε</text>,
  mask: <><rect x="0" y="5" width="24" height="14" rx="6" fill="#e4eaf6" /><text x="12" y="16" fontSize="12" fontWeight="700" textAnchor="middle" fill="#333" fontFamily="Open Sans, sans-serif">abc</text></>,
  sideTag: <><path d="M0 12l5-6h18v12H5z" fill="#f8de3e" stroke="#c49d12" strokeWidth="2" /><text x="13.500" y="15" fontSize="9" fontWeight="700" textAnchor="middle" fill="#3d3210" fontFamily="Open Sans, sans-serif">abc</text></>,
  cube: <><path d="M12 1l10 6-10 6L2 7z" fill="#f58a8a" stroke="#a31818" strokeWidth="1.2" /><path d="M2 7l10 6v10L2 18z" fill="#8fe03b" stroke="#3c8c12" /><path d="M22 7l-10 6v10l10-5z" fill="#f8e14b" stroke="#b4901a" /></>,
  diagramTree: <><path d="M5 17V6h14v11M12 4v15" stroke="#c07c1e" strokeWidth="3" fill="none" /><rect x="7" y="0" width="10" height="7" fill="#f26060" /><rect x="0" y="17" width="10" height="7" fill="#f8de3e" /><rect x="14" y="17" width="10" height="7" fill="#84b2ea" /></>,
  history: <><g transform="translate(15 0) scale(-.62 .62)"><UndoShape fill="#6aa874" stroke="#3c7a47" /></g><g transform="translate(9 10) scale(.6)"><UndoShape fill="#ea7a3c" stroke="#c65a20" /></g></>,
  mapSelect: <><path d="M2 3l6 2 6-2 8 2v15H2z" fill="#ececec" stroke="#aaa" /><path d="M8 6l4 15 3-5 5 6 2-2-5-5 5-2z" fill="#fff" stroke="#888" strokeWidth="1.4" /></>,
  plus: <><path d="M8 0h8v8h8v8h-8v8H8v-8H0V8h8z" fill="#fff" stroke="#4c8f52" strokeWidth="1.6" /><path d="M12 3v18M3 12h18" stroke="#4c8f52" strokeWidth="3.500" /></>,
  minus: <><rect x="1" y="8" width="22" height="9" fill="#f7eaea" stroke="#cfa3a3" /><path d="M5 12.500h14" stroke="#cf9a9a" strokeWidth="2.500" /></>,
  up: <path d="M12 3l11 17H1z" fill="#bcc8d4" stroke="#8894a0" />,
  down: <path d="M12 21L1 4h22z" fill="#bcc8d4" stroke="#8894a0" />,
  duplicate: <><path d="M1 5v18h15M5 1h18v17H5z" fill="#eee" stroke="#888" strokeWidth="1.8" /><circle cx="18" cy="18" r="5" fill="#ddd8c8" stroke="#999" /></>,
  unlock: <><path d="M8 10V6a5 5 0 0 1 9 0v6" stroke="#999" strokeWidth="3" fill="none" /><rect x="2" y="11" width="20" height="12" rx="2" fill="#b8b294" stroke="#888" /></>,
  lock: <><path d="M6 12V7a6 6 0 0 1 12 0v5" stroke="#999" strokeWidth="2.500" fill="none" /><rect x="4" y="11" width="16" height="12" rx="2" fill="#666" /></>,
  override: <><path d="M7 1h14v20H7v-6l-6-4 6-4z" fill="#f7f7f7" stroke="#666" strokeWidth="1.5" /><path d="M7 5v12l-6-6z" fill="#777" /><path d="M10 6h8M10 11h8" stroke="#444" strokeWidth="1.5" /><path d="M13 15h11l-5.500 7z" fill="#444" /></>,
  search: <><circle cx="10" cy="10" r="7.500" fill="none" stroke="#8a8a8a" strokeWidth="2" /><path d="M15.500 15.500L22 22" stroke="#8a8a8a" strokeWidth="2.500" /></>,
  clear: <><path d="M0 12l6-8h18v16H6z" fill="#999" /><path d="M10 8l9 8M19 8l-9 8" stroke="#fff" strokeWidth="2" /></>,
  grid: <><rect x="0" y="0" width="24" height="24" rx="2" fill="#b9d1ec" /><path d="M2 2h5v5H2zM9.500 2h5v5h-5zM17 2h5v5h-5zM2 9.500h5v5H2zM9.500 9.500h5v5h-5zM17 9.500h5v5h-5zM2 17h5v5H2zM9.500 17h5v5h-5zM17 17h5v5h-5z" fill="#5d8cc2" /></>,
  mouse: <><path d="M8 5c3-3 8-1 8 2l3 9c0 6-7 8-9 3z" fill="#fff" stroke="#111" strokeWidth="2" /><path d="M9 9l7-3M10 13l7-3M13 4l1 5" stroke="#111" strokeWidth="2" /><path d="M2 11c4-4 4 8 8 4M3 19c3 4 6 5 9 3M18 3l4-3M20 7h4M7 2l4 1" stroke="#111" strokeWidth="2" fill="none" /></>,
  globe: <g fill="none" stroke="#666" strokeWidth="1.5"><circle cx="12" cy="12" r="9.500" fill="#b5b5b5" /><path d="M1 12h22M12 2v20M4 6h16M4 18h16M8 3c-4 6-4 12 0 18M16 3c4 6 4 12 0 18" /></g>,
  chat: <><path d="M12 2c6 0 11 3.500 11 8.500S18 19 14 19l-4 4v-4C5 19 1 15.500 1 10.500S6 2 12 2z" fill="#5d5d5d" /><circle cx="7" cy="10.500" r="2" fill="#fff" /><circle cx="12" cy="10.500" r="2" fill="#fff" /><circle cx="17" cy="10.500" r="2" fill="#fff" /></>,
  check: <path d="M1 12l4-2 4 5L23 2 10 22z" fill="#35c435" stroke="#128212" strokeWidth="1.2" />,
  close: <><circle cx="12" cy="12" r="11" fill="#444" /><path d="M8 8l8 8M16 8l-8 8" stroke="#fff" strokeWidth="3" /></>,
};

const Icon = ({ name, size = 24 }) => (
  <svg width={size} height={size} viewBox="0 0 24 24" fill="none" aria-hidden="true">
    {icons[name]}
  </svg>
);

const turns = { down: 0, left: 90, up: 180, right: 270 };

const Triangle = ({ dir = "down", color = "#555" }) => (
  <svg width="10" height="10" viewBox="0 0 10 10" aria-hidden="true">
    <path d="M0.500 2.500h9L5 7.500z" fill={color} transform={`rotate(${turns[dir]} 5 5)`} />
  </svg>
);

/* ---------- data ---------- */

// text before the access key, the key, text after it
const menus = [
  ["Pro", "j", "ect"], ["", "E", "dit"], ["", "V", "iew"], ["", "L", "ayer"], ["", "S", "ettings"],
  ["", "P", "lugins"], ["Vect", "o", "r"], ["", "R", "aster"], ["", "D", "atabase"], ["", "W", "eb"],
  ["", "M", "esh"], ["Pro", "c", "essing"], ["", "H", "elp"],
];

// "|" is a drag handle, "/" a divider, "v" a menu arrow, a leading "-" marks a disabled tool
const projectTools =
  "| page open save layout layouts styles | +hand panTo zoomIn zoomOut zoomFull zoomSel zoomLayer -zoomNative zoomLast -zoomNext newMap new3d newBookmark bookmarks clock refresh | select v selectForm v deselect v selectLoc | identify abacus gear sigma table v ruler v tip -actions -v".split(" ");

const editTools =
  "| dataSource geopackage newShape spatialite memory meshNew virtual | -pencils pencil -save -digitize v -newShape -vertex v -editTable -trash -cut -copy -paste -undoGray -redoGray | tag diagram / tagPin tagRed / -tagPin2 -tagEye -tagMove -tagTurn -tagEdit | metasearch | python | help |".split(" ");

const browserItems = [
  [0, "", "star", "Favorites"],
  [0, "right", "bookmarks", "Spatial Bookmarks"],
  [0, "right", "home", "Home"],
  [0, "right", "folder", "C:\\"],
  [0, "right", "folder", "D:\\"],
  [0, "down", "folderOpen", "E:\\"],
  [1, "right", "folder", ".pnpm-store"],
  [1, "right", "folder", "compiler"],
  [1, "right", "folder", "geoserver"],
  [1, "down", "folderOpen", "GISdata"],
  [2, "down", "folderOpen", "china"],
  [3, "right", "folder", "chinafull"],
  [3, "down", "folderOpen", "chinanofull"],
  [4, "right", "folder", "备份"],
  [4, "", "shp", "chinaborder.shp"],
  [2, "right", "folder", "CHINA2000"],
  [2, "right", "folder", "workspace_202401"],
  [2, "right", "folder", "workspaceA"],
  [2, "right", "folder", "xs_vector_4326"],
  [2, "right", "folder", "象山矢量文件"],
];

const styleItems = [
  ["dash  black", "#000"],
  ["dash blue", "#3d7abf"],
  ["dash green", "#4daf4a"],
  ["dash red", "#e31a2c"],
];

/* ---------- map geometry ---------- */

// each sheet has its own digitising origin and resolution
const sheets = {
  west: { x: 310, y: 260, kx: 2.178, ky: 2.613 },
  east: { x: 980, y: 170, kx: 2.613, ky: 2.8 },
  south: { x: 940, y: 700, kx: 3, ky: 3 },
};

const points = (sheet, text) => {
  const s = sheets[sheet];
  return text.trim().split(/\s+/).map((pair) => {
    const [x, y] = pair.split(",").map(Number);
    return [s.x + x / s.kx, s.y + y / s.ky];
  });
};

// adds small bends between vertices so that long segments read as surveyed lines
const roughen = (pts, amount) => {
  let seed = 7;
  const rand = () => {
    seed = (seed * 16807) % 2147483647;
    return (seed / 2147483647 - 0.5) * 2 * amount;
  };
  const out = [pts[0]];
  for (let i = 1; i < pts.length; i++) {
    const [ax, ay] = pts[i - 1];
    const [bx, by] = pts[i];
    const steps = Math.max(1, Math.round(Math.hypot(bx - ax, by - ay) / 4));
    for (let s = 1; s < steps; s++) {
      out.push([ax + ((bx - ax) * s) / steps + rand(), ay + ((by - ay) * s) / steps + rand()]);
    }
    out.push(pts[i]);
  }
  return out;
};

const toPath = (pts) => "M" + pts.map(([x, y]) => `${x.toFixed(1)} ${y.toFixed(1)}`).join("L");

const northBorder = toPath(roughen([
  ...points("west", `75,605 72,588 63,568 78,560 80,545 88,533 100,530 118,516 150,505 155,522 188,515 200,487 240,487
    260,468 338,433 348,425 343,408 360,393 350,388 368,377 355,345 350,300 333,292 338,284 380,277 408,267 420,274
    442,272 430,257 445,215 463,173 505,186 543,190 570,180 567,130 577,114 605,110 620,90 622,78 660,77 662,92
    670,105 695,122 717,136 735,133 765,150 778,177 795,195 797,215 790,245 782,262 792,274 830,284 890,285 920,298
    960,321 978,322 1000,373 1022,399 1055,396 1145,408 1205,401 1245,410 1260,426 1285,430 1330,445 1360,445
    1383,457 1430,433 1480,415 1568,413`),
  ...points("east", `135,693 180,680 210,648 257,627 230,593 245,560 265,552 295,565 342,571 372,553 392,535 445,532
    472,520 485,490 528,485 533,473 570,466 650,470 658,460 645,437 590,397 552,396 530,414 510,403 458,411 437,397
    437,387 450,380 455,358 495,297 550,313 595,291 625,287 620,265 665,202 698,182 697,152 663,148 705,113 770,102
    830,97 860,101 900,120 925,116 955,130 985,172 1010,215 1030,255 1040,290 1050,310 1095,310 1140,322 1175,350
    1197,350 1200,385 1217,411 1265,413 1295,410 1310,393 1370,378 1418,374 1395,385 1403,410 1375,430 1362,480
    1335,520 1322,555 1257,541 1245,557 1215,567 1228,600 1225,655 1218,672 1190,680 1195,697 1160,665 1150,695
    1110,717 1065,718 1078,740 1072,752 1020,747 1010,730 990,740 965,777 910,800 880,822`),
], 0.7));

const southBorder = toPath(roughen(points("west", `127,663 130,670 103,680 130,688 160,705 168,740 180,748 190,743
  225,764 257,765 262,805 293,823 280,835 282,860 298,880 305,908 292,922 280,906 268,912 272,935 283,950 285,970
  297,990 320,990 340,1010 370,1022 384,1040 395,1018 422,1022 445,1050 485,1080 505,1075 520,1100 545,1115 550,1105
  553,1125 572,1125 588,1145 610,1135 640,1150 700,1135 705,1165 712,1178 725,1145 745,1128 800,1142 812,1137
  822,1165 838,1170 843,1196 905,1194 930,1162 975,1143 997,1125 1050,1152 1060,1143 1072,1113 1095,1130 1102,1160
  1117,1163 1120,1210 1117,1248 1080,1282 1070,1305 1075,1332 1070,1347 1090,1336 1125,1336 1117,1345 1130,1385
  1153,1390 1140,1435 1168,1440 1185,1470 1220,1455 1227,1482 1247,1483 1240,1420 1265,1418 1277,1405 1300,1420
  1312,1402 1325,1415 1330,1405 1340,1417 1370,1400 1378,1382 1397,1373 1430,1393 1455,1397 1447,1415 1458,1440
  1480,1460 1508,1466`), 1));

const seaDashes = [
  "1040,183 1023,252", "990,352 945,404", "879,508 861,536 848,566", "824,681 824,750", "820,912 809,946 793,977",
  "662,1144 621,1192", "467,1388 440,1400 404,1409", "199,1195 198,1228 204,1259", "320,897 318,930 304,958",
  "261,669 282,696 294,732",
].map((d) => toPath(points("south", d))).join("");

const openDashes = ["88,604 100,604 110,607", "116,622 118,634 123,646"].map((d) => toPath(points("west", d))).join("");

const coast = [
  toPath(roughen([
    ...points("east", `880,825 870,838 820,845 780,862 760,882 715,893 720,885 745,880 742,865 722,855 735,835 755,825
      773,800 752,780 715,780 685,817 635,835 620,860 590,880 565,870 545,890 543,905 570,928 608,930 625,948 608,958
      612,975 635,983 650,978 665,962 700,944 740,962 795,967 788,995 765,992 710,1012 695,1035 670,1038 640,1070
      620,1100 640,1118 675,1135 710,1222 735,1235 757,1270 745,1266 712,1270 760,1300 762,1330 745,1323 715,1337
      765,1370 757,1400 745,1440 715,1480 690,1515 650,1550`),
    ...points("south", `860,100 862,130 820,155 800,180 770,195 770,205 735,243 700,250 680,280 630,290 600,290 545,315
      517,295 505,330 480,335 455,352 420,352 340,375 312,395 330,400 332,425 320,436 297,436 283,400 285,372 293,365
      250,362 190,362`),
  ], 0.9)),
  toPath(roughen(points("south", "220,490 260,457 345,443 362,468 340,500 330,527 277,557 225,540 220,490"), 0.6)),
  toPath(roughen(points("south", `967,145 992,160 985,190 973,215 965,262 935,305 928,340 917,337 913,320 888,290
    880,265 887,238 905,195 935,157 967,145`), 0.6)),
  toPath(points("south", "527,1167 550,1148 565,1145 560,1156 540,1170 527,1167")),
  toPath(points("south", "270,1183 278,1172 296,1168")),
  toPath(points("south", "1066,124 1076,118 1088,122 1080,127 1066,124")),
].join("");

const harbours = [
  ...points("east", "765,1370 772,1362 768,1378 778,1370 745,1290 757,1298 750,1414 755,1440 715,1476 655,1548 672,1036 738,882 788,870 820,878 703,918 695,938 783,1330 800,1328"),
  ...points("south", "872,68 862,130 850,138 830,155 775,190 705,250 545,315 535,318 525,322 485,335 457,352 325,388 320,395"),
];

const islets = points("south", `646,390 695,411 475,480 524,497 388,619 432,626 400,652 395,668 440,663 447,680 430,697
  455,657 520,705 532,715 545,688 577,671 586,680 688,662 749,731 612,800 371,694 570,943 550,963 575,975 540,975
  560,985 690,942 722,967 745,966 752,983 720,988 726,1023 632,1000 652,1022 641,1044 620,1033 678,1007 676,1040
  510,1015 523,1024 548,1013 568,1033 550,1043 562,1035 447,1054 472,1050 390,1070 430,1093 452,1093 463,1093
  398,1106 388,1112 418,1138 397,1155 392,1167 490,1134 513,1086 532,1096 570,1095 541,1064 605,1122 620,1115
  574,1135 565,1140 585,1150 588,1172 581,1188 508,1203 488,1240 449,1260 446,1275 452,1292 450,1311 469,1315
  333,1137 331,1150 302,1150 420,1382 430,1376 1091,108 1139,110 853,243 848,258 968,333 964,297 250,390 645,1068
  690,1083 663,1093 675,1075`);

const dots = (list) => list.map(([x, y]) => `M${x.toFixed(1)} ${y.toFixed(1)}h2`).join("");

const MapDrawing = () => (
  <svg viewBox="312 170 1243 1042" preserveAspectRatio="xMidYMid meet" fill="none" role="img" aria-label="chinaborder">
    <defs>
      <filter id="halo" filterUnits="userSpaceOnUse" x="312" y="170" width="1243" height="1042">
        <feGaussianBlur stdDeviation="4" />
      </filter>
    </defs>
    <path d={coast} stroke="#b5daf3" strokeWidth="0.9" />
    <path d={dots(islets)} stroke="#9ccbec" strokeWidth="1.8" />
    <path d={dots(harbours)} stroke="#8ec5ec" strokeWidth="3" />
    <g strokeLinejoin="round" strokeLinecap="round">
      <path d={northBorder + southBorder + seaDashes} stroke="#f23535" strokeOpacity="0.54" strokeWidth="14" filter="url(#halo)" />
      <path d={northBorder + southBorder + seaDashes + openDashes} stroke="#000" strokeWidth="2.4" />
    </g>
  </svg>
);

/* ---------- pieces ---------- */

const Tools = ({ items }) =>
  items.map((item, index) => {
    const key = `__${index}`;
    if (item === "|") return <Handle key={key} />;
    if (item === "/") return <Divider key={key} />;
    const dim = item[0] === "-";
    const on = item[0] === "+";
    const name = dim || on ? item.slice(1) : item;
    if (name === "v") return <MenuArrow key={key} $dim={dim} aria-label="more" />;
    return (
      <ToolButton key={key} $on={on} $dim={dim} aria-label={name}>
        <Icon name={name} />
      </ToolButton>
    );
  });

const DockButtons = () => (
  <>
    <DockButton aria-label="float">
      <svg width="7" height="7"><path d="M3 .5h3.500V4H3zM.5 3H4v3.500H.5z" fill="none" stroke="#555" /></svg>
    </DockButton>
    <DockButton aria-label="close">
      <svg width="7" height="7"><path d="M1 1l5 5M6 1L1 6" stroke="#333" strokeWidth="1.8" /></svg>
    </DockButton>
  </>
);

const Spin = ({ width, value, id, label, topDim }) => (
  <SpinBox $width={width}>
    <input id={id} aria-label={label} defaultValue={value} />
    <SpinButtons>
      <button aria-label="increase"><Triangle dir="up" color={topDim ? "#aaa" : "#555"} /></button>
      <button aria-label="decrease"><Triangle /></button>
    </SpinButtons>
  </SpinBox>
);

const Scrolls = ({ parts, horizontal }) => (
  <ScrollBar $horizontal={horizontal}>
    <ScrollButton aria-label="back"><Triangle dir={horizontal ? "left" : "up"} /></ScrollButton>
    <ScrollThumb $grow={parts[0]} />
    <ScrollSpace $grow={parts[1]} />
    <ScrollButton aria-label="forward"><Triangle dir={horizontal ? "right" : "down"} /></ScrollButton>
  </ScrollBar>
);

const Swatch = ({ color, width = 18, glow }) => (
  <svg width="18" height="22">
    {glow && (
      <>
        <defs>
          <linearGradient id="glow" x2="0" y2="1">
            <stop stopColor="#f66" stopOpacity="0.05" />
            <stop offset=".5" stopColor="#f55" stopOpacity="0.75" />
            <stop offset="1" stopColor="#f66" stopOpacity="0.05" />
          </linearGradient>
        </defs>
        <rect width="18" height="22" fill="url(#glow)" />
      </>
    )}
    <path d={`M0 10.500H${width}`} stroke={color} strokeWidth="2.200" />
  </svg>
);

const BrowserPanel = () => (
  <>
    <DockHeader>
      <DockTitle>Browser</DockTitle>
      <DockButtons />
    </DockHeader>
    <DockTools $height={27}>
      {["addLayer", "refresh", "funnel", "collapse", "info"].map((name) => (
        <ToolButton key={name} $size={24} aria-label={name}>
          <Icon name={name} size={15} />
        </ToolButton>
      ))}
    </DockTools>
    <TreeFrame>
      <TreeList>
        {browserItems.map(([depth, dir, icon, label]) => (
          <TreeRow key={label} $depth={depth} $selected={icon === "shp"}>
            <Expander>{dir && <Triangle dir={dir} />}</Expander>
            <Icon name={icon} size={19} />
            <TreeLabel>{label}</TreeLabel>
          </TreeRow>
        ))}
      </TreeList>
      <Scrolls parts={[211, 201]} />
      <Scrolls horizontal parts={[110, 132]} />
      <Corner />
    </TreeFrame>
    <Grip />
  </>
);

const LayersPanel = () => (
  <>
    <DockHeader>
      <DockTitle>Layers</DockTitle>
      <DockButtons />
    </DockHeader>
    <DockTools $height={28}>
      {["brush", "addGroup", "eye", "funnelMenu", "epsilonFilter", "v", "expand", "collapse", "removeLayer"].map((name) =>
        name === "v" ? (
          <MenuArrow key={name} aria-label="filter options" />
        ) : (
          <ToolButton key={name} $size={24} $on={name === "brush"} aria-label={name}>
            <Icon name={name} size={16} />
          </ToolButton>
        )
      )}
    </DockTools>
    <LayerList>
      <LayerRow $group>
        <label>
          <Triangle />
          <CheckBox defaultChecked />
          <Icon name="vline" size={20} />
          <b>chinaborder</b>
        </label>
      </LayerRow>
      <LayerRow $tall><label><CheckBox defaultChecked /><Swatch color="#000" glow />b1</label></LayerRow>
      <LayerRow $tall><label><CheckBox defaultChecked /><Swatch color="#000" width={11} />b2</label></LayerRow>
      <LayerRow><label><CheckBox defaultChecked /><Swatch color="#0a7fd6" />b3</label></LayerRow>
      <LayerRow><label><CheckBox defaultChecked /><Swatch color="#6cc551" />type is ''</label></LayerRow>
    </LayerList>
  </>
);

const ScaleControl = ({ title, icon, value }) => (
  <div>
    {title}
    <ScaleCell>
      <ToolButton $size={25} $dim aria-label={icon}><Icon name={icon} size={23} /></ToolButton>
      <Combo $width={88} $light disabled aria-label={title}><option>{value}</option></Combo>
      <SplitPair>
        <Button $dim aria-label="set from canvas"><Icon name="mapSelect" size={20} /></Button>
        <DropButton $height={27} $dim aria-label="scale options" />
      </SplitPair>
    </ScaleCell>
  </div>
);

const SymbolEditor = () => (
  <>
    <SymbolTop>
      <svg width="100" height="140">
        <defs>
          <linearGradient id="band" x2="0" y2="1">
            <stop stopColor="#f55" stopOpacity="0" />
            <stop offset=".5" stopColor="#f33" stopOpacity="0.7" />
            <stop offset="1" stopColor="#f55" stopOpacity="0" />
          </linearGradient>
        </defs>
        <rect y="58" width="100" height="24" fill="url(#band)" />
        <path d="M0 69.500h100" stroke="#111" strokeWidth="2.500" strokeDasharray="5 2" />
      </svg>
      <SymbolTree>
        <SymbolRow $root>
          <Triangle />
          <svg width="16" height="16"><rect width="16" height="16" fill="#f4a5a3" /><path d="M0 8h16" stroke="#111" strokeWidth="2" strokeDasharray="4 2" /></svg>
          Line
        </SymbolRow>
        <SymbolRow>
          <svg width="16" height="16"><path d="M0 8h16" stroke="#111" strokeWidth="2" strokeDasharray="4 2" strokeDashoffset="2" /></svg>
          Simple L...
        </SymbolRow>
        <SymbolRow>
          <svg width="16" height="16"><rect width="16" height="16" fill="#f9b5b3" /><path d="M0 8h16" stroke="#c9151b" strokeWidth="2" strokeDasharray="4 2" strokeDashoffset="2" /></svg>
          Simple L...
        </SymbolRow>
      </SymbolTree>
      <SymbolButtons>
        {["plus", "up", "minus", "down", "duplicate", "unlock"].map((name) => (
          <Button key={name} $width={33} $dim={name !== "plus"} aria-label={name}><Icon name={name} size={18} /></Button>
        ))}
      </SymbolButtons>
    </SymbolTop>
    <SymbolForm>
      <Row $height={22}>
        <FieldLabel $width={49} htmlFor="color">Color</FieldLabel>
        <ColorButton id="color" aria-label="Color" />
        <DropButton $height={22} aria-label="color options" />
      </Row>
      <Row $height={24} $top={8}>
        <FieldLabel $width={50} htmlFor="opacity">Opacity</FieldLabel>
        <Slider id="opacity" defaultValue={100} />
        <Spin width={100} value="100.0 %" label="Opacity value" topDim />
        <OverrideButton aria-label="data defined opacity"><Icon name="override" size={22} /></OverrideButton>
      </Row>
      <Row $height={24} $top={9}>
        <FieldLabel $width={49} htmlFor="width">Width</FieldLabel>
        <Spin width={116} value="0.50000" id="width" />
        <UnitCombo $width={122} aria-label="Width unit"><option>Millimeters</option></UnitCombo>
        <OverrideButton aria-label="data defined width"><Icon name="override" size={22} /></OverrideButton>
      </Row>
      <FormRule />
      <Row $height={22} $top={8}>
        <SearchBox>
          <Icon name="search" size={17} />
          <input aria-label="Search styles" defaultValue="Favorites" />
          <Icon name="clear" size={17} />
          <MenuArrow aria-label="choose group" />
        </SearchBox>
        <StylesButton aria-label="style manager"><Icon name="styles" size={18} /></StylesButton>
      </Row>
      <StyleFrame>
        <div>
          <StyleHeading>Project Styles</StyleHeading>
          <StyleHeading>Default</StyleHeading>
          <StyleGrid>
            {styleItems.map(([label, color]) => (
              <StyleItem key={label}>
                <svg width="66" height="4"><path d="M2 2h54" stroke={color} strokeWidth="3" strokeDasharray="4 8.500" strokeLinecap="round" /></svg>
                <figcaption>{label}</figcaption>
              </StyleItem>
            ))}
          </StyleGrid>
        </div>
        <Scrolls parts={[91, 205]} />
      </StyleFrame>
      <ListFooter>
        <Button $on aria-label="icon view"><Icon name="grid" size={18} /></Button>
        <ToolButton $size={18} aria-label="list view"><Icon name="table" size={19} /></ToolButton>
        <Spacer />
        <Button $width={87} $height={22}>Save Symbol…</Button>
        <Button $width={80} $height={22}>Advanced<Triangle /></Button>
      </ListFooter>
    </SymbolForm>
  </>
);

const StylingPanel = () => (
  <RightDock>
    <DockHeader $flush>
      <DockTitle>Layer Styling</DockTitle>
      <DockButtons />
    </DockHeader>
    <LayerPicker>
      <Icon name="vline" size={20} />
      <PlainSelect aria-label="Layer"><option>chinaborder</option></PlainSelect>
    </LayerPicker>
    <StylingBody>
      <SideTabs>
        {["brush", "sideTag", "mask", "cube", "diagramTree", "history"].map((name, index) => (
          <SideTab key={name} $on={index === 0} aria-label={name}><Icon name={name} size={22} /></SideTab>
        ))}
      </SideTabs>
      <StylePage>
        <Row $gap={12}>
          <Button aria-label="back"><Icon name="back" size={18} /></Button>
          Edit Rule
        </Row>
        <Row $top={7}>
          <FieldLabel $raised htmlFor="rule-label">Label</FieldLabel>
          <TextInput id="rule-label" defaultValue="b2" />
        </Row>
        <Row $top={6} $gap={7}>
          <FieldLabel $raised $width={66}><Radio name="rule" defaultChecked />Filter</FieldLabel>
          <TextInput aria-label="Filter expression" defaultValue="type = 'b2'" />
          <Button $width={33} aria-label="expression"><Icon name="epsilon" size={18} /></Button>
          <Button $width={80} $height={21}>Test</Button>
        </Row>
        <Row $height={32}>
          <FieldLabel><Radio name="rule" />Else</FieldLabel>
          Catch-all for other features
        </Row>
        <Row $height={26}>
          <FieldLabel htmlFor="rule-desc">Description</FieldLabel>
          <TextInput id="rule-desc" />
        </Row>
        <Row $height={17} $top={7}>
          <CheckLabel $bold><CheckBox />Scale range</CheckLabel>
        </Row>
        <GroupBox $pad="11px 11px 13px">
          <ScaleGrid>
            <ScaleControl title="Minimum (exclusive)" icon="zoomOut" value="1:100000" />
            <ScaleControl title="Maximum (inclusive)" icon="zoomIn" value="1:1000" />
          </ScaleGrid>
        </GroupBox>
        <Row $height={17} $top={6}>
          <CheckLabel $bold><CheckBox defaultChecked />Symbol</CheckLabel>
        </Row>
        <GroupBox $fill $pad="12px 13px 0 12px">
          <SymbolEditor />
        </GroupBox>
        <Row $top={8} $gap={6}>
          <Button aria-label="undo"><Icon name="undo" size={18} /></Button>
          <Button aria-label="redo"><Icon name="redo" size={18} /></Button>
          <Spacer />
          <CheckLabel><CheckBox defaultChecked />Live update</CheckLabel>
          <span />
          <Button $width={80} $height={21}>应用</Button>
        </Row>
      </StylePage>
    </StylingBody>
  </RightDock>
);

const leftGutter = ["st", "gr", "c.", "on", "cc", "nt", "ge", "-lo", "ME", "g", "g", "s.c", "nt"];

const App = () => (
  <Desktop>
    <GlobalStyle />
    <Gutter>
      R.<GutterGap $size={24} />m<GutterGap $size={46} />cc
      {leftGutter.map((text, index) => <span key={`__${index}`}>{text}</span>)}
    </Gutter>
    <Window>
      <TitleBar>
        <Icon name="qgis" size={20} />
        <TitleText>*Untitled Project — QGIS</TitleText>
        <CaptionButton aria-label="minimize"><svg width="12" height="12"><path d="M0 6.500h12" stroke="#000" /></svg></CaptionButton>
        <CaptionButton aria-label="maximize"><svg width="12" height="12"><rect x=".5" y=".5" width="11" height="11" rx="1.500" fill="none" stroke="#000" /></svg></CaptionButton>
        <CaptionButton aria-label="close"><svg width="12" height="12"><path d="M.5.5l11 11M11.500.5l-11 11" stroke="#000" /></svg></CaptionButton>
      </TitleBar>
      <MenuBar>
        {menus.map(([before, key, after]) => (
          <MenuItem key={before + key + after} href="#">{before}<u>{key}</u>{after}</MenuItem>
        ))}
      </MenuBar>
      <Toolbar $height={39}><Tools items={projectTools} /></Toolbar>
      <Toolbar $height={38}><Tools items={editTools} /></Toolbar>
      <Workspace>
        <LeftDock>
          <BrowserPanel />
          <LayersPanel />
        </LeftDock>
        <Canvas>
          <Message>
            <Icon name="check" size={22} />
            <b>Style saved:</b>
            Successfully exported style to <a href="#">E:\GISdata\china\chinanofull\chinaborder7.sld</a>
            <MessageSteps><StepButton aria-label="previous" /><StepButton aria-label="next" /></MessageSteps>
            <MessageMore>6 more</MessageMore>
            <CrsButton aria-label="dismiss"><Icon name="close" size={17} /><Triangle /></CrsButton>
          </Message>
          <MapArea><MapDrawing /></MapArea>
        </Canvas>
        <StylingPanel />
      </Workspace>
      <StatusBar>
        <Locator>
          <Icon name="search" size={16} />
          <input aria-label="Locate" placeholder="Type to locate (Ctrl+K)" />
        </Locator>
        <StatusField $after={4}>Coordinate<CoordInput defaultValue="49.34°,126.35°" /></StatusField>
        <ToolButton $size={20} aria-label="extents"><Icon name="mouse" size={20} /></ToolButton>
        <StatusField $before={10} $after={11}>
          Scale
          <Combo $width={86} $light aria-label="Scale"><option>18457540</option></Combo>
        </StatusField>
        <ToolButton $size={20} aria-label="lock scale"><Icon name="lock" size={20} /></ToolButton>
        <StatusField $before={7} $after={10}>Magnifier<Spin width={93} value="100%" label="Magnifier" /></StatusField>
        <StatusField $after={7}>Rotation<RotationSpin><Spin width={93} value="0.0 °" label="Rotation" /></RotationSpin></StatusField>
        <CheckLabel><CheckBox defaultChecked />Render</CheckLabel>
        <CrsButton $before={14} $after={32}><Icon name="globe" size={20} />EPSG:4326</CrsButton>
        <CrsButton aria-label="messages"><Icon name="chat" size={22} /></CrsButton>
        <Watermark>CSDN @pigs_dream</Watermark>
      </StatusBar>
    </Window>
    <Gutter $right>f:</Gutter>
  </Desktop>
);

export default App;
